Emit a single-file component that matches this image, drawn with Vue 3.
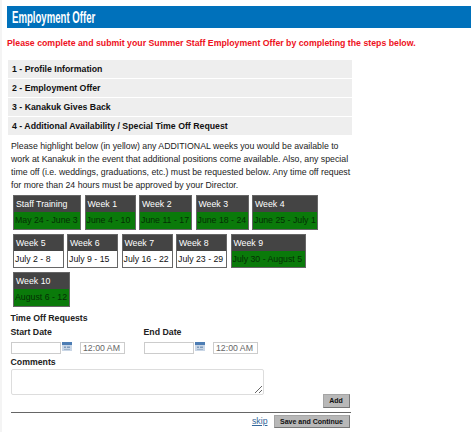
<script setup>
const rows = [
  [
    { title: 'Staff Training', dates: 'May 24 - June 3', on: true, w: 68 },
    { title: 'Week 1', dates: 'June 4 - 10', on: true, w: 51 },
    { title: 'Week 2', dates: 'June 11 - 17', on: true, w: 53 },
    { title: 'Week 3', dates: 'June 18 - 24', on: true, w: 53 },
    { title: 'Week 4', dates: 'June 25 - July 1', on: true, w: 66 }
  ],
  [
    { title: 'Week 5', dates: 'July 2 - 8', on: false, w: 50.5 },
    { title: 'Week 6', dates: 'July 9 - 15', on: false, w: 51 },
    { title: 'Week 7', dates: 'July 16 - 22', on: false, w: 51 },
    { title: 'Week 8', dates: 'July 23 - 29', on: false, w: 51 },
    { title: 'Week 9', dates: 'July 30 - August 5', on: true, w: 75 }
  ],
  [{ title: 'Week 10', dates: 'August 6 - 12', on: true, w: 57 }]
]
const steps = [
  '1 - Profile Information',
  '2 - Employment Offer',
  '3 - Kanakuk Gives Back',
  '4 - Additional Availability / Special Time Off Request'
]
</script>

<template>
  <div class="page">
    <h1 class="banner"><span>Employment Offer</span></h1>
    <p class="notice">Please complete and submit your Summer Staff Employment Offer by completing the steps below.</p>

    <div class="steps">
      <div v-for="step in steps" :key="step" class="step">{{ step }}</div>
    </div>

    <p class="intro">
      Please highlight below (in yellow) any ADDITIONAL weeks you would be available to<br />
      work at Kanakuk in the event that additional positions come available. Also, any special<br />
      time off (i.e. weddings, graduations, etc.) must be requested below. Any time off request<br />
      for more than 24 hours must be approved by your Director.
    </p>

    <div class="weeks">
      <div v-for="(row, i) in rows" :key="i" class="week-row">
        <div
          v-for="week in row"
          :key="week.title"
          class="week"
          :class="{ on: week.on }"
          :style="{ width: week.w + 'px' }"
        >
          <div class="week-title">{{ week.title }}</div>
          <div class="week-dates">{{ week.dates }}</div>
        </div>
      </div>
    </div>

    <div class="form">
      <div class="label">Time Off Requests</div>
      <div class="dates">
        <div v-for="name in ['Start Date', 'End Date']" :key="name" class="date-group">
          <div class="label">{{ name }}</div>
          <div class="date-inputs">
            <input class="date-input" type="text" />
            <svg class="cal" viewBox="0 0 10 9" width="10" height="9">
              <rect width="10" height="9" fill="#c9d6e6" />
              <rect width="10" height="3" fill="#4d7db4" />
              <rect x="2" y="4.5" width="2" height="1.5" fill="#7f9cbd" />
              <rect x="5" y="4.5" width="3" height="1.5" fill="#7f9cbd" />
              <rect x="2" y="7" width="6" height="1" fill="#9fb4cc" />
            </svg>
            <input class="time-input" type="text" value="12:00 AM" />
          </div>
        </div>
      </div>
      <div class="label comments-label">Comments</div>
      <textarea class="comments"></textarea>
      <div class="add-row"><button class="btn add">Add</button></div>
      <div class="footer">
        <a class="skip">skip</a>
        <button class="btn save">Save and Continue</button>
      </div>
    </div>
  </div>
</template>

<style>
html, body { background: #fff; }
</style>

<style scoped>
.page {
  width: 474px;
  height: 432px;
  overflow: hidden;
  box-sizing: border-box;
  padding: 6px 0 0 5px;
  border-left: 2px solid #f4f4f4;
  font-family: "Liberation Sans", Arial, sans-serif;
  font-size: 8.75px;
  color: #111;
}
.banner {
  margin: 0;
  width: 464px;
  height: 22px;
  padding-left: 5px;
  box-sizing: border-box;
  background: #0071bb;
  color: #fff;
  font-size: 17px;
  line-height: 23px;
  font-weight: bold;
  white-space: nowrap;
}
.banner span {
  display: inline-block;
  transform: scaleX(0.565);
  transform-origin: left;
}
.notice {
  margin: 9px 0 0 0;
  color: #ee1122;
  font-weight: bold;
  line-height: 13px;
  white-space: nowrap;
}
.steps {
  margin: 10px 0 0 1px;
  width: 344px;
  display: flex;
  flex-direction: column;
  gap: 1px;
}
.step {
  height: 18px;
  background: #eeeeee;
  padding-left: 4px;
  font-weight: bold;
  line-height: 18px;
}
.intro {
  margin: 5px 0 0 4px;
  line-height: 13px;
  color: #222;
  white-space: nowrap;
}
.weeks {
  margin: 3px 0 0 6px;
  display: flex;
  flex-direction: column;
  gap: 4px;
}
.week-row {
  display: flex;
  gap: 3.5px;
}
.week {
  box-sizing: border-box;
  border: 1px solid #666;
  height: 34.5px;
  white-space: nowrap;
  overflow: hidden;
}
.week-title {
  height: 16px;
  line-height: 16px;
  background: #444;
  color: #fff;
  padding-left: 2px;
}
.week-dates {
  height: 17px;
  line-height: 16px;
  padding-left: 1px;
  background: #fff;
  color: #111;
}
.week.on .week-dates {
  background: #0a7a0a;
  color: #042f04;
}
.form {
  margin: 5px 0 0 3.5px;
}
.label {
  font-weight: bold;
  line-height: 13px;
  color: #222;
}
.comments-label {
  margin-top: 2px;
}
.dates {
  display: flex;
  margin-top: 1px;
}
.date-group {
  width: 133px;
}
.date-inputs {
  display: flex;
  align-items: flex-start;
  margin-top: 3px;
}
.date-input {
  box-sizing: border-box;
  width: 50px;
  height: 12px;
  border: 1px solid #ccc;
  padding: 0;
  margin: 0;
}
.cal {
  margin-left: 1.5px;
}
.time-input {
  box-sizing: border-box;
  width: 44.5px;
  height: 12px;
  margin: 0 0 0 8px;
  border: 1px solid #ccc;
  padding: 0 2px;
  font-family: inherit;
  font-size: 8.75px;
  color: #666;
}
.comments {
  display: block;
  box-sizing: border-box;
  width: 253.5px;
  height: 26px;
  border: 1px solid #ddd;
  border-radius: 2px;
  margin: 0;
  padding: 0;
}
.add-row {
  width: 339px;
  display: flex;
  justify-content: flex-end;
}
.btn {
  font-family: inherit;
  font-weight: bold;
  font-size: 7px;
  white-space: nowrap;
  color: #111;
  background: #b8b8b8;
  border: 1px solid #a5a5a5;
  border-bottom-color: #777;
  border-right-color: #777;
  padding: 0;
  margin: 0;
}
.add {
  width: 27px;
  height: 14px;
  margin-top: -1px;
}
.footer {
  margin-top: 4px;
  width: 340px;
  border-top: 1px solid #666;
  display: flex;
  justify-content: flex-end;
  align-items: center;
  padding: 2px 1px 0 0;
  box-sizing: border-box;
}
.skip {
  color: #336699;
  text-decoration: underline;
  margin-right: 6px;
}
.save {
  width: 76px;
  height: 13px;
}
</style>
